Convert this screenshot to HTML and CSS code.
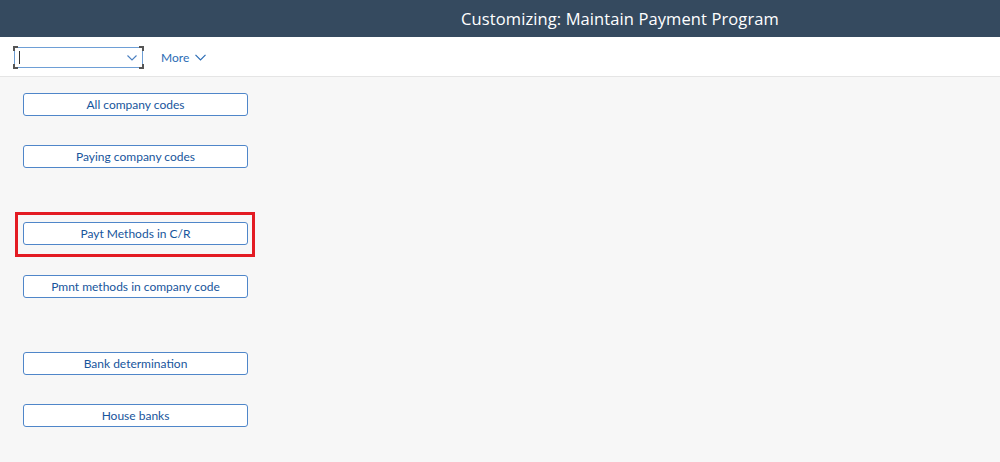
FILE: index.html
```html
<!DOCTYPE html>
<html>
<head>
<meta charset="utf-8">
<link rel="stylesheet" href="styles.css">
</head>
<body>
<header class="shell">
  <h1 class="title">Customizing: Maintain Payment Program</h1>
</header>
<div class="toolbar">
  <div class="select">
    <span class="caret"></span>
    <svg class="chev" width="10" height="6" viewBox="0 0 10 6"><polyline points="0.5,0.5 5,5 9.5,0.5" fill="none" stroke="#4a7fc0" stroke-width="1.1"/></svg>
    <span class="corner tl"></span><span class="corner tr"></span><span class="corner bl"></span><span class="corner br"></span>
  </div>
  <div class="more">More
    <svg width="11" height="7" viewBox="0 0 11 7"><polyline points="0.5,0.8 5.5,5.8 10.5,0.8" fill="none" stroke="#2b6cb5" stroke-width="1.2"/></svg>
  </div>
</div>
<main class="content">
  <button class="btn b1">All company codes</button>
  <button class="btn b2">Paying company codes</button>
  <div class="highlight">
    <button class="btn">Payt Methods in C/R</button>
  </div>
  <button class="btn b4">Pmnt methods in company code</button>
  <button class="btn b5">Bank determination</button>
  <button class="btn b6">House banks</button>
</main>
</body>
</html>
```

FILE: styles.css
```css
html, body {
  margin: 0;
  padding: 0;
  background: #f7f7f7;
  font-family: "Open Sans", "Liberation Sans", Arial, sans-serif;
}

.shell {
  height: 37px;
  background: #354a5f;
  display: flex;
  align-items: center;
  justify-content: center;
  padding-left: 240px;
  box-sizing: border-box;
}

.title {
  margin: 0;
  color: #ffffff;
  font-size: 16.5px;
  font-weight: 400;
  letter-spacing: 0.1px;
}

.toolbar {
  height: 40px;
  background: #ffffff;
  border-bottom: 1px solid #e5e5e5;
  box-sizing: border-box;
  display: flex;
  align-items: center;
  padding-left: 14px;
}

.select {
  position: relative;
  width: 129px;
  height: 21px;
  border: 1px solid #6e9fd6;
  box-sizing: border-box;
  background: #fff;
  margin-top: 1px;
}

.caret {
  position: absolute;
  left: 4px;
  top: 3px;
  width: 1px;
  height: 13px;
  background: #333;
}

.chev {
  position: absolute;
  right: 5px;
  top: 7px;
}

.corner {
  position: absolute;
  width: 3px;
  height: 3px;
  border-color: #555;
  border-style: solid;
  border-width: 0;
}
.corner.tl { left: -2px; top: -2px; border-left-width: 2px; border-top-width: 2px; }
.corner.tr { right: -2px; top: -2px; border-right-width: 2px; border-top-width: 2px; }
.corner.bl { left: -2px; bottom: -2px; border-left-width: 2px; border-bottom-width: 2px; }
.corner.br { right: -2px; bottom: -2px; border-right-width: 2px; border-bottom-width: 2px; }

.more {
  margin-left: 18px;
  color: #2b6cb5;
  font-family: Lato, "Open Sans", sans-serif;
  font-size: 12px;
  display: flex;
  align-items: center;
  gap: 6px;
  margin-top: 1px;
}

.content {
  display: flex;
  flex-direction: column;
  align-items: flex-start;
  padding: 16px 0 0 23px;
}

.btn {
  width: 225px;
  height: 23px;
  box-sizing: border-box;
  background: #ffffff;
  border: 1px solid #4f86c9;
  border-radius: 3px;
  color: #17559c;
  font-family: Lato, "Open Sans", sans-serif;
  font-size: 12px;
  padding: 0;
  margin: 0;
  line-height: 20px;
}

.b2 { margin-top: 29px; }
.b4 { margin-top: 18px; }
.b5 { margin-top: 54px; }
.b6 { margin-top: 29px; }

.highlight {
  margin: 44px 0 0 -8px;
  border: 3px solid #e31b23;
  padding: 7px 4px 9px 5px;
  display: flex;
}
```
